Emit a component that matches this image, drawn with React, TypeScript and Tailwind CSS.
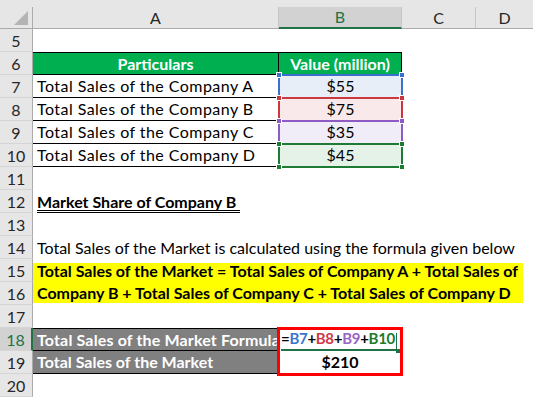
const font = { fontFamily: 'Lato, "Open Sans", sans-serif' };

const refs = [
  { row: 7, value: '$55', bg: 'bg-[#e8eef8]', line: 'border-[#3a6fcc]', dot: 'bg-[#3a6fcc]' },
  { row: 8, value: '$75', bg: 'bg-[#f9e9ea]', line: 'border-[#c9383f]', dot: 'bg-[#c9383f]' },
  { row: 9, value: '$35', bg: 'bg-[#f0ecf8]', line: 'border-[#8c5cc4]', dot: 'bg-[#8c5cc4]' },
  { row: 10, value: '$45', bg: 'bg-[#e5f2e7]', line: 'border-[#1e7b34]', dot: 'bg-[#1e7b34]' },
];

const companies = ['A', 'B', 'C', 'D'];

function RowHead({ n, active }: { n: number; active?: boolean }) {
  if (active) {
    return (
      <div className="w-[33px] h-full shrink-0 flex items-center justify-center bg-[#d2d2d2] text-[#217346] border-r-2 border-r-[#217346] border-b border-b-[#d4d4d4]">
        {n}
      </div>
    );
  }
  return (
    <div className="w-[33px] h-full shrink-0 flex items-center justify-center bg-[#e6e6e6] text-[#262626] border-r border-r-[#ababab] border-b border-b-[#d4d4d4]">
      {n}
    </div>
  );
}

function RefBox({ line, dot }: { line: string; dot: string }) {
  return (
    <div className="absolute -left-px -top-px w-[125px] h-[25px] pointer-events-none">
      <div className={`absolute inset-0 border-2 ${line}`} />
      <span className={`absolute -left-[2px] -top-[2px] w-[6px] h-[6px] border border-white ${dot}`} />
      <span className={`absolute -right-[2px] -top-[2px] w-[6px] h-[6px] border border-white ${dot}`} />
      <span className={`absolute -left-[2px] -bottom-[2px] w-[6px] h-[6px] border border-white ${dot}`} />
      <span className={`absolute -right-[2px] -bottom-[2px] w-[6px] h-[6px] border border-white ${dot}`} />
    </div>
  );
}

function Row({ n, active, children }: { n: number; active?: boolean; children?: React.ReactNode }) {
  return (
    <div className="flex h-[23px] leading-[23px] whitespace-nowrap">
      <RowHead n={n} active={active} />
      {children}
    </div>
  );
}

export default function App() {
  return (
    <div className="w-[533px] h-[397px] overflow-hidden bg-white text-[16px] text-black" style={font}>
      {/* column headers */}
      <div className="flex h-[29px] bg-[#e6e6e6] border-b border-b-[#ababab]">
        <div className="relative w-[33px] shrink-0 border-r border-r-[#ababab] mt-[7px]">
          <div className="absolute right-[4px] bottom-[3px] w-0 h-0 border-l-[14px] border-l-transparent border-b-[14px] border-b-[#b4b4b4]" />
        </div>
        <div className="w-[246px] shrink-0 mt-[7px] border-r border-r-[#c6c6c6] flex items-center justify-center text-[#262626]">A</div>
        <div className="w-[123px] shrink-0 mt-[7px] -mb-px border-r border-r-[#c6c6c6] border-b-2 border-b-[#217346] bg-[#d2d2d2] flex items-center justify-center text-[#217346]">B</div>
        <div className="w-[74px] shrink-0 mt-[7px] border-r border-r-[#c6c6c6] flex items-center justify-center text-[#262626]">C</div>
        <div className="flex-1 mt-[7px] flex items-center justify-center text-[#262626]">D</div>
      </div>

      <Row n={5} />

      <Row n={6}>
        <div className="w-[246px] shrink-0 bg-[#00b050] border-y border-r border-black text-white font-bold text-center leading-[21px]">
          Particulars
        </div>
        <div className="w-[123px] shrink-0 bg-[#00b050] border-y border-r border-black text-white font-bold text-center leading-[21px]">
          Value (million)
        </div>
      </Row>

      {refs.map((r, i) => (
        <Row key={r.row} n={r.row}>
          <div className="w-[246px] shrink-0 border-b border-r border-black pl-[4px] leading-[22px] tracking-[0.45px]">
            Total Sales of the Company {companies[i]}
          </div>
          <div className={`relative w-[123px] shrink-0 text-center leading-[22px] ${r.bg}`}>
            {r.value}
            <RefBox line={r.line} dot={r.dot} />
          </div>
        </Row>
      ))}

      <Row n={11} />

      <Row n={12}>
        <div className="pl-[4px] font-bold">
          <span className="inline-block leading-[17px] border-b-[3px] border-double border-black">Market Share of Company B&nbsp;</span>
        </div>
      </Row>

      <Row n={13} />

      <Row n={14}>
        <div className="pl-[4px]">Total Sales of the Market is calculated using the formula given below</div>
      </Row>

      <Row n={15}>
        <div className="w-[490px] shrink-0 mt-[4px] h-[19px] leading-[15px] bg-[#ffff00] pl-[4px] font-bold">
          Total Sales of the Market = Total Sales of Company A + Total Sales of
        </div>
      </Row>

      <Row n={16}>
        <div className="w-[490px] shrink-0 h-[21px] leading-[21px] bg-[#ffff00] pl-[4px] font-bold">
          Company B + Total Sales of Company C + Total Sales of Company D
        </div>
      </Row>

      <Row n={17} />

      <Row n={18} active>
        <div className="w-[246px] shrink-0 bg-[#808080] border-y border-r border-black text-white font-bold pl-[4px] leading-[21px] tracking-[0.15px]">
          Total Sales of the Market Formula
        </div>
        <div className="relative w-[123px] shrink-0 font-bold pl-[2px] leading-[21px] text-[15px] tracking-[-0.3px]">
          <span>=</span>
          <span className="text-[#3c74d0]">B7</span>
          <span>+</span>
          <span className="text-[#cf3a48]">B8</span>
          <span>+</span>
          <span className="text-[#9a63c7]">B9</span>
          <span>+</span>
          <span className="text-[#217a2b]">B10</span>
          <div className="absolute left-[2px] right-[5px] bottom-0 h-[2px] bg-[#217346]" />
          <div className="absolute right-[5px] top-[5px] bottom-0 w-px bg-[#217346]" />
          <div className="absolute right-[2px] -bottom-[2px] w-[4px] h-[4px] bg-[#217346] z-20" />
          <div className="absolute -left-[2px] -top-px w-[126px] h-[49px] border-[3px] border-[#ff0000] z-10" />
        </div>
      </Row>

      <Row n={19}>
        <div className="w-[246px] shrink-0 bg-[#808080] border-b border-r border-black text-white font-bold pl-[4px] leading-[22px]">
          Total Sales of the Market
        </div>
        <div className="w-[123px] shrink-0 border-b border-r border-black font-bold text-center leading-[22px]">
          $210
        </div>
      </Row>

      <Row n={20} />
    </div>
  );
}
